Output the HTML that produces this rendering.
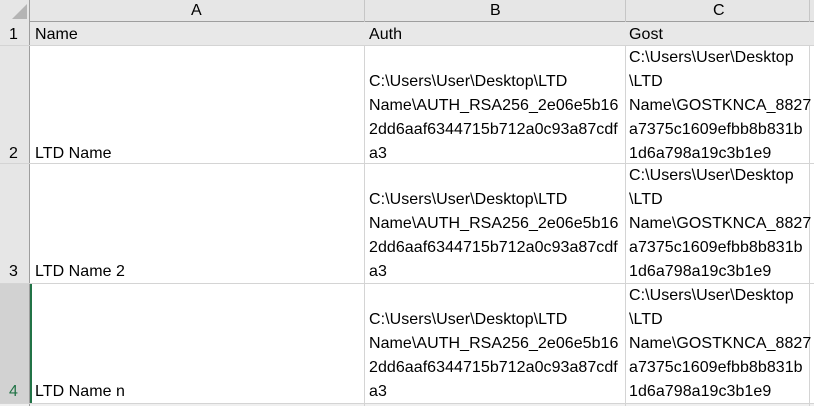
<!DOCTYPE html>
<html><head><style>
body{margin:0;width:814px;height:406px;background:#fff;position:relative;overflow:hidden;font-family:"Liberation Sans",sans-serif;font-size:16px;color:#000}
div{position:absolute}
.t{white-space:nowrap;line-height:24px;height:24px;letter-spacing:0.05px}
</style></head><body>
<div style="left:0;top:0;width:814px;height:22px;background:#e6e6e6"></div>
<div style="left:0;top:22px;width:30px;height:384px;background:#e6e6e6"></div>
<div style="left:0;top:403px;width:814px;height:3px;background:#f0f0f0"></div>
<svg style="position:absolute;left:0;top:0" width="30" height="22"><polygon points="12,19 27,19 27,4" fill="#b4b4b4"/></svg>
<div style="left:30px;top:21px;width:784px;height:1px;background:#9e9e9e"></div>
<div style="left:29px;top:0;width:1px;height:406px;background:#9e9e9e"></div>
<div style="left:364px;top:0;width:1px;height:22px;background:#c6c6c6"></div>
<div style="left:625px;top:0;width:1px;height:22px;background:#c6c6c6"></div>
<div style="left:809px;top:0;width:1px;height:22px;background:#c6c6c6"></div>
<div class="t" style="left:191px;top:0;line-height:22px">A</div>
<div class="t" style="left:490px;top:0;line-height:22px">B</div>
<div class="t" style="left:713px;top:0;line-height:22px">C</div>
<div style="left:30px;top:22px;width:784px;height:23px;background:#e8e8e8"></div>
<div style="left:0;top:284px;width:29px;height:119px;background:#d2d2d2"></div>
<div style="left:30px;top:284px;width:2px;height:119px;background:#217346"></div>
<div style="left:0;top:45px;width:814px;height:1px;background:#d4d4d4"></div>
<div style="left:0;top:163px;width:814px;height:1px;background:#d4d4d4"></div>
<div style="left:0;top:283px;width:814px;height:1px;background:#d4d4d4"></div>
<div style="left:0;top:403px;width:814px;height:1px;background:#d4d4d4"></div>
<div style="left:364px;top:45px;width:1px;height:361px;background:#d4d4d4"></div>
<div style="left:625px;top:45px;width:1px;height:361px;background:#d4d4d4"></div>
<div style="left:809px;top:45px;width:1px;height:361px;background:#d4d4d4"></div>
<div class="t" style="left:9px;top:23px">1</div>
<div class="t" style="left:9px;top:142px">2</div>
<div class="t" style="left:9px;top:260px">3</div>
<div class="t" style="left:9px;top:380px;color:#217346">4</div>
<div class="t" style="left:35px;top:23px">Name</div>
<div class="t" style="left:369px;top:23px">Auth</div>
<div class="t" style="left:629px;top:23px">Gost</div>
<div class="t" style="left:35px;top:142px">LTD Name</div>
<div class="t" style="left:369px;top:70px">C:\Users\User\Desktop\LTD<br>Name\AUTH_RSA256_2e06e5b16<br>2dd6aaf6344715b712a0c93a87cdf<br>a3</div>
<div class="t" style="left:629px;top:46px">C:\Users\User\Desktop<br>\LTD<br>Name\GOSTKNCA_8827<br>a7375c1609efbb8b831b<br>1d6a798a19c3b1e9</div>
<div class="t" style="left:35px;top:260px">LTD Name 2</div>
<div class="t" style="left:369px;top:188px">C:\Users\User\Desktop\LTD<br>Name\AUTH_RSA256_2e06e5b16<br>2dd6aaf6344715b712a0c93a87cdf<br>a3</div>
<div class="t" style="left:629px;top:164px">C:\Users\User\Desktop<br>\LTD<br>Name\GOSTKNCA_8827<br>a7375c1609efbb8b831b<br>1d6a798a19c3b1e9</div>
<div class="t" style="left:35px;top:380px">LTD Name n</div>
<div class="t" style="left:369px;top:308px">C:\Users\User\Desktop\LTD<br>Name\AUTH_RSA256_2e06e5b16<br>2dd6aaf6344715b712a0c93a87cdf<br>a3</div>
<div class="t" style="left:629px;top:284px">C:\Users\User\Desktop<br>\LTD<br>Name\GOSTKNCA_8827<br>a7375c1609efbb8b831b<br>1d6a798a19c3b1e9</div>
</body></html>
